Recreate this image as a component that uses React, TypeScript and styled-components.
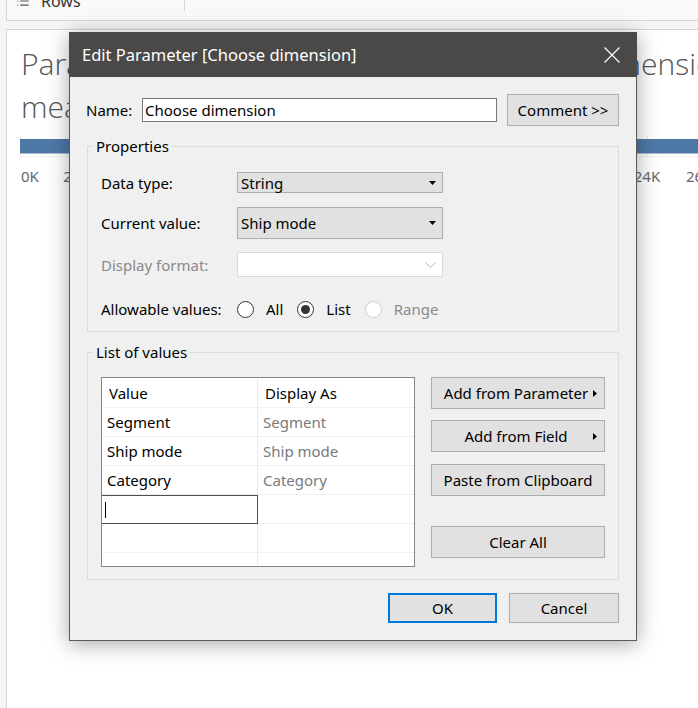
import React from 'react'
import styled, { createGlobalStyle } from 'styled-components'
import { List } from 'lucide-react'

const UI_FONT = `'Noto Sans', 'Open Sans', 'DejaVu Sans', sans-serif`

const GlobalStyle = createGlobalStyle`
  html, body {
    margin: 0;
    padding: 0;
  }
  body {
    background: #f5f5f5;
    overflow: hidden;
  }
`

const Page = styled.div`
  position: relative;
  width: 698px;
  height: 708px;
  overflow: hidden;
  display: flex;
  flex-direction: column;
  background: #f5f5f5;
  font-family: ${UI_FONT};
`

const ShelfBar = styled.div`
  display: flex;
  height: 20px;
  margin-left: 6px;
  border-left: 1px solid #d6d6d6;
  border-bottom: 1px solid #d6d6d6;
  background: #f9f9f9;
  overflow: hidden;
`

const ShelfLabel = styled.div`
  width: 178px;
  height: 20px;
  margin-top: -9px;
  padding-left: 9px;
  box-sizing: border-box;
  border-right: 1px solid #d6d6d6;
  display: flex;
  align-items: center;
  gap: 11px;
  font-size: 16px;
  line-height: 20px;
  color: #333;
`

const SheetPanel = styled.div`
  flex: 1;
  margin: 8px 0 0 6px;
  padding: 12px 0 0 14px;
  border-left: 1px solid #d6d6d6;
  border-top: 1px solid #d6d6d6;
  background: #fff;
  overflow: hidden;
`

const SheetTitle = styled.div`
  font-family: 'Open Sans', 'Noto Sans', sans-serif;
  font-weight: 300;
  font-size: 30px;
  line-height: 43px;
  color: #555;
  white-space: nowrap;
`

const Chart = styled.svg`
  display: block;
  margin-left: -1px;
`

const Dialog = styled.div`
  position: absolute;
  left: 69px;
  top: 32px;
  width: 568px;
  box-sizing: border-box;
  border: 1px solid #5a5a5a;
  border-top: none;
  background: #f0f0f0;
  box-shadow: 0 3px 20px rgba(0, 0, 0, 0.35);
  display: flex;
  flex-direction: column;
  font-family: ${UI_FONT};
  font-size: 15px;
  color: #000;
`

const TitleBar = styled.div`
  height: 45px;
  margin: 0 -1px;
  padding: 0 17px 0 13px;
  background: #4a4947;
  color: #fff;
  font-size: 16.5px;
  display: flex;
  align-items: center;
  justify-content: space-between;
`

const DialogBody = styled.div`
  display: flex;
  flex-direction: column;
  padding: 17px 17px 17px 16px;
`

const NameRow = styled.div`
  display: flex;
  align-items: center;
  height: 32px;
`

const NameLabel = styled.span`
  width: 56px;
`

const TextInput = styled.div`
  width: 355px;
  height: 24px;
  box-sizing: border-box;
  border: 1px solid #7a7a7a;
  background: #fff;
  padding-left: 2px;
  display: flex;
  align-items: center;
`

const Button = styled.div<{ $w: number; $h?: number; $default?: boolean }>`
  width: ${p => p.$w}px;
  height: ${p => p.$h ?? 32}px;
  box-sizing: border-box;
  border: ${p => (p.$default ? '2px solid #0078d7' : '1px solid #adadad')};
  background: #e1e1e1;
  display: flex;
  align-items: center;
  justify-content: center;
  flex-shrink: 0;
`

const CommentButton = styled(Button)`
  margin-left: 10px;
`

const GroupBox = styled.fieldset<{ $top: number }>`
  margin: ${p => p.$top}px 0 0 1px;
  padding: 0;
  border: 1px solid #dcdcdc;
  min-width: 0;
`

const GroupLegend = styled.legend`
  margin-left: 5px;
  padding: 0 3px;
  line-height: 20px;
`

const GroupInner = styled.div<{ $pt: number }>`
  padding: ${p => p.$pt}px 12px 12px 13px;
`

const FormRow = styled.div<{ $h: number; $mt?: number }>`
  display: grid;
  grid-template-columns: 136px 206px;
  align-items: center;
  height: ${p => p.$h}px;
  margin-top: ${p => p.$mt ?? 0}px;
`

const FieldLabel = styled.span<{ $disabled?: boolean }>`
  color: ${p => (p.$disabled ? '#8a8a8a' : '#000')};
`

const Select = styled.div<{ $h: number; $disabled?: boolean }>`
  height: ${p => p.$h}px;
  box-sizing: border-box;
  border: 1px solid ${p => (p.$disabled ? '#d9d9d9' : '#adadad')};
  background: ${p => (p.$disabled ? '#fff' : '#e1e1e1')};
  padding: 0 6px 0 3px;
  display: flex;
  align-items: center;
  justify-content: space-between;
`

const RadioGroup = styled.div`
  display: flex;
  align-items: center;
  gap: 14px;
  white-space: nowrap;
`

const RadioOption = styled.label<{ $disabled?: boolean }>`
  display: flex;
  align-items: center;
  gap: 12px;
  color: ${p => (p.$disabled ? '#8a8a8a' : '#000')};
`

const RadioCircle = styled.span<{ $checked?: boolean; $disabled?: boolean }>`
  width: 17px;
  height: 17px;
  box-sizing: border-box;
  border-radius: 50%;
  border: 1px solid ${p => (p.$disabled ? '#cccccc' : '#333')};
  background: #fff;
  display: flex;
  align-items: center;
  justify-content: center;

  &::after {
    content: '';
    display: ${p => (p.$checked ? 'block' : 'none')};
    width: 9px;
    height: 9px;
    border-radius: 50%;
    background: #333;
  }
`

const ListArea = styled.div`
  display: flex;
  gap: 16px;
`

const ValueTable = styled.div`
  width: 314px;
  height: 190px;
  box-sizing: border-box;
  border: 1px solid #828790;
  background: #fff;
  overflow: hidden;
  display: grid;
  grid-template-columns: 156px 1fr;
  grid-template-rows: 30px repeat(6, 29px);
`

const Cell = styled.div<{ $muted?: boolean; $first?: boolean; $header?: boolean }>`
  box-sizing: border-box;
  border-bottom: 1px solid #f0f0f0;
  border-right: ${p => (p.$first ? '1px solid #ebebeb' : 'none')};
  padding-left: ${p => (p.$header ? 7 : 5)}px;
  display: flex;
  align-items: center;
  color: ${p => (p.$muted ? '#7a7a7a' : '#000')};
  white-space: nowrap;
`

const EditCell = styled.div`
  box-sizing: border-box;
  margin-left: -1px;
  border: 1px solid #4d4d4d;
  display: flex;
  align-items: center;
  padding-left: 3px;
`

const Caret = styled.span`
  width: 1px;
  height: 16px;
  background: #000;
`

const SideButtons = styled.div`
  display: flex;
  flex-direction: column;
  width: 174px;
`

const MenuButton = styled(Button)<{ $mt: number }>`
  margin-top: ${p => p.$mt}px;
  padding: 0 7px;
`

const MenuText = styled.span`
  flex: 1;
  text-align: center;
  white-space: nowrap;
`

const Footer = styled.div`
  display: flex;
  justify-content: flex-end;
  gap: 12px;
  margin-top: 13px;
`

const DropArrow = () => (
  <svg width="7" height="4" viewBox="0 0 7 4">
    <path d="M0 0h7L3.5 4z" fill="#000" />
  </svg>
)

const Chevron = () => (
  <svg width="11" height="6" viewBox="0 0 11 6">
    <path d="M0.5 0.5l5 5 5-5" fill="none" stroke="#b5b5b5" strokeWidth="1" />
  </svg>
)

const SideArrow = () => (
  <svg width="4" height="7" viewBox="0 0 4 7">
    <path d="M0 0l4 3.5L0 7z" fill="#000" />
  </svg>
)

const CloseIcon = () => (
  <svg width="16" height="16" viewBox="0 0 16 16">
    <path d="M0.5 0.5l15 15M15.5 0.5l-15 15" stroke="#fff" strokeWidth="1.2" />
  </svg>
)

const TICK = 52.25
const ticks = Array.from({ length: 14 }, (_, i) => i)

const values = [
  ['Segment', 'Segment'],
  ['Ship mode', 'Ship mode'],
  ['Category', 'Category'],
]

const App = () => {
  return (
    <Page>
      <GlobalStyle />
      <ShelfBar>
        <ShelfLabel>
          <List size={14} strokeWidth={2} color="#555" />
          <span>Rows</span>
        </ShelfLabel>
      </ShelfBar>
      <SheetPanel>
        <SheetTitle>Parameters set to dynamically change the dimension and</SheetTitle>
        <SheetTitle>measure</SheetTitle>
        <Chart width={678} height={64}>
          {ticks.map(i => (
            <line key={i} x1={TICK * i + 0.5} x2={TICK * i + 0.5} y1={8} y2={28} stroke="#e6e6e6" />
          ))}
          <rect x={0} y={11} width={678} height={14.5} fill="#4e79a7" />
          <line x1={0} x2={678} y1={28.5} y2={28.5} stroke="#ededed" />
          {ticks.map(i => (
            <text
              key={i}
              x={i === 0 ? 1 : TICK * i}
              y={54}
              textAnchor={i === 0 ? 'start' : 'middle'}
              fontFamily="'Noto Sans', sans-serif"
              fontSize={15}
              fill="#666"
            >
              {i * 2}K
            </text>
          ))}
        </Chart>
      </SheetPanel>

      <Dialog>
        <TitleBar>
          <span>Edit Parameter [Choose dimension]</span>
          <CloseIcon />
        </TitleBar>
        <DialogBody>
          <NameRow>
            <NameLabel>Name:</NameLabel>
            <TextInput>Choose dimension</TextInput>
            <CommentButton $w={112}>Comment &gt;&gt;</CommentButton>
          </NameRow>

          <GroupBox $top={10}>
            <GroupLegend>Properties</GroupLegend>
            <GroupInner $pt={16}>
              <FormRow $h={21}>
                <FieldLabel>Data type:</FieldLabel>
                <Select $h={21}>
                  <span>String</span>
                  <DropArrow />
                </Select>
              </FormRow>
              <FormRow $h={32} $mt={14}>
                <FieldLabel>Current value:</FieldLabel>
                <Select $h={32}>
                  <span>Ship mode</span>
                  <DropArrow />
                </Select>
              </FormRow>
              <FormRow $h={25} $mt={13}>
                <FieldLabel $disabled>Display format:</FieldLabel>
                <Select $h={25} $disabled>
                  <span />
                  <Chevron />
                </Select>
              </FormRow>
              <FormRow $h={20} $mt={22}>
                <FieldLabel>Allowable values:</FieldLabel>
                <RadioGroup>
                  <RadioOption>
                    <RadioCircle />
                    All
                  </RadioOption>
                  <RadioOption>
                    <RadioCircle $checked />
                    List
                  </RadioOption>
                  <RadioOption $disabled>
                    <RadioCircle $disabled />
                    Range
                  </RadioOption>
                </RadioGroup>
              </FormRow>
            </GroupInner>
          </GroupBox>

          <GroupBox $top={10}>
            <GroupLegend>List of values</GroupLegend>
            <GroupInner $pt={15}>
              <ListArea>
                <ValueTable>
                  <Cell $first $header>Value</Cell>
                  <Cell $header>Display As</Cell>
                  {values.map(([v, d]) => (
                    <React.Fragment key={v}>
                      <Cell $first>{v}</Cell>
                      <Cell $muted>{d}</Cell>
                    </React.Fragment>
                  ))}
                  <EditCell>
                    <Caret />
                  </EditCell>
                  <Cell />
                  <Cell $first />
                  <Cell />
                  <Cell $first />
                  <Cell />
                </ValueTable>
                <SideButtons>
                  <MenuButton $w={174} $mt={0}>
                    <MenuText>Add from Parameter</MenuText>
                    <SideArrow />
                  </MenuButton>
                  <MenuButton $w={174} $mt={11}>
                    <MenuText>Add from Field</MenuText>
                    <SideArrow />
                  </MenuButton>
                  <MenuButton $w={174} $mt={12}>
                    <MenuText>Paste from Clipboard</MenuText>
                  </MenuButton>
                  <MenuButton $w={174} $mt={30}>
                    <MenuText>Clear All</MenuText>
                  </MenuButton>
                </SideButtons>
              </ListArea>
            </GroupInner>
          </GroupBox>

          <Footer>
            <Button $w={109} $h={30} $default>OK</Button>
            <Button $w={110} $h={30}>Cancel</Button>
          </Footer>
        </DialogBody>
      </Dialog>
    </Page>
  )
}

export default App
